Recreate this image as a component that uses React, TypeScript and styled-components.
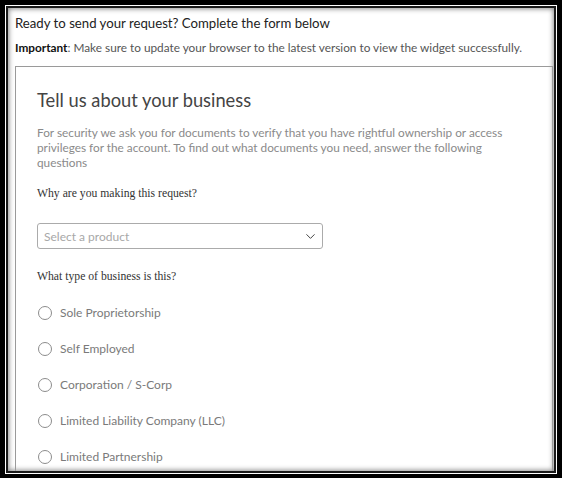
import React from 'react';
import styled, { createGlobalStyle } from 'styled-components';
import { ChevronDown } from 'lucide-react';

const GlobalStyle = createGlobalStyle`
  html, body {
    margin: 0;
    padding: 0;
    background: #000;
  }
  * {
    box-sizing: border-box;
  }
`;

const descriptionLines = [
  'For security we ask you for documents to verify that you have rightful ownership or access',
  'privileges for the account. To find out what documents you need, answer the following',
  'questions',
];

const businessTypes = [
  'Sole Proprietorship',
  'Self Employed',
  'Corporation / S-Corp',
  'Limited Liability Company (LLC)',
  'Limited Partnership',
];

const App: React.FC = () => {
  return (
    <>
      <GlobalStyle />
      <Frame>
        <Ring>
          <Screen>
            <Intro>Ready to send your request? Complete the form below</Intro>
            <Notice>
              <strong>Important</strong>: Make sure to update your browser to the latest version to view the widget successfully.
            </Notice>
            <Card>
              <Heading>Tell us about your business</Heading>
              <Description>
                {descriptionLines.map((line) => (
                  <DescriptionLine key={line}>{line}</DescriptionLine>
                ))}
              </Description>
              <Question>Why are you making this request?</Question>
              <Select>
                <Placeholder>Select a product</Placeholder>
                <ChevronDown size={15} strokeWidth={1.6} color="#444" />
              </Select>
              <Question $gap={20}>What type of business is this?</Question>
              <RadioList>
                {businessTypes.map((label) => (
                  <RadioRow key={label}>
                    <RadioCircle />
                    <RadioLabel>{label}</RadioLabel>
                  </RadioRow>
                ))}
              </RadioList>
            </Card>
          </Screen>
        </Ring>
      </Frame>
    </>
  );
};

export default App;

const Frame = styled.div`
  width: 562px;
  height: 478px;
  padding: 5px 5px 4px 5px;
  background: #000;
`;

const Ring = styled.div`
  height: 100%;
  border: 1px solid #fff;
`;

const Screen = styled.div`
  height: 100%;
  background: #fff;
  border: 2px solid #1a1a1a;
  box-shadow: inset 0 0 5px 1px rgba(0, 0, 0, 0.45);
  padding: 6px 1px 0 7px;
  overflow: hidden;
  font-family: Lato, 'Liberation Sans', sans-serif;
`;

const Intro = styled.div`
  font-size: 13.2px;
  line-height: 18px;
  color: #222;
  margin-bottom: 8px;
`;

const Notice = styled.div`
  font-size: 11.8px;
  line-height: 15px;
  color: #555;
  margin-bottom: 11px;
  white-space: nowrap;

  strong {
    color: #111;
    font-weight: 700;
  }
`;

const Card = styled.div`
  border: 1px solid #9a9a9a;
  border-bottom: none;
  padding: 20px 14px 0 21px;
  height: 420px;
`;

const Heading = styled.h2`
  margin: 0 0 12px;
  font-size: 18.3px;
  font-weight: 400;
  line-height: 26px;
  color: #444;
`;

const Description = styled.p`
  margin: 0 0 16px;
  font-size: 11.8px;
  line-height: 15px;
  color: #8a8a8a;
`;

const DescriptionLine = styled.span`
  display: block;
  white-space: nowrap;
`;

const Question = styled.div<{ $gap?: number }>`
  font-family: 'Liberation Serif', serif;
  font-size: 11.7px;
  line-height: 15px;
  color: #333;
  margin-bottom: ${({ $gap }) => $gap ?? 22}px;
`;

const Select = styled.div`
  width: 286px;
  height: 26px;
  border: 1px solid #ababab;
  border-radius: 3px;
  display: flex;
  align-items: center;
  justify-content: space-between;
  padding: 0 4px 0 6px;
  margin-bottom: 20px;
`;

const Placeholder = styled.span`
  font-size: 12px;
  color: #a8a8a8;
`;

const RadioList = styled.div`
  display: flex;
  flex-direction: column;
  gap: 19px;
`;

const RadioRow = styled.div`
  display: flex;
  align-items: center;
  gap: 8px;
  height: 17px;
`;

const RadioCircle = styled.span`
  width: 14px;
  height: 14px;
  margin-left: 1px;
  border-radius: 50%;
  border: 1px solid #8c8c8c;
  flex-shrink: 0;
`;

const RadioLabel = styled.span`
  font-size: 12px;
  color: #7a7a7a;
`;
